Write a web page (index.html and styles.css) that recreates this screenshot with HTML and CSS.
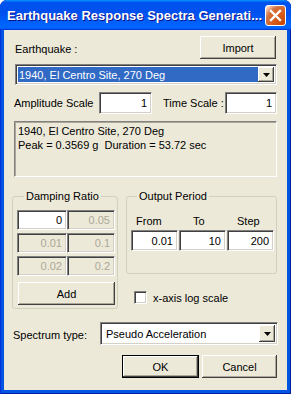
FILE: index.html
```html
<!DOCTYPE html>
<html>
<head>
<meta charset="utf-8">
<link rel="stylesheet" href="styles.css">
</head>
<body>
<div class="window">
  <div class="titlebar">
    <span class="title">Earthquake Response Spectra Generati...</span>
    <span class="close"><svg width="13" height="13" viewBox="0 0 13 13"><path d="M2 2 L11 11 M11 2 L2 11" stroke="#fff" stroke-width="2.4" stroke-linecap="square" fill="none"/></svg></span>
  </div>
  <div class="client">
    <div class="row row-eq">
      <span class="label">Earthquake :</span>
      <div class="btn btn-import">Import</div>
    </div>
    <div class="combo combo-eq">
      <div class="combo-field"><span class="sel">1940, El Centro Site, 270 Deg</span></div>
      <div class="combo-btn"><svg width="7" height="4" viewBox="0 0 7 4"><path d="M0 0 H7 L3.5 4 Z" fill="#000"/></svg></div>
    </div>
    <div class="row row-scale">
      <span class="label lbl-amp">Amplitude Scale</span>
      <div class="input in-amp">1</div>
      <span class="label lbl-time">Time Scale :</span>
      <div class="input in-time">1</div>
    </div>
    <div class="info">1940, El Centro Site, 270 Deg<br>Peak = 0.3569 g&nbsp; Duration = 53.72 sec</div>
    <div class="groups">
      <fieldset class="group damping">
        <legend>Damping Ratio</legend>
        <div class="dgrid">
          <div class="input">0</div>
          <div class="input disabled">0.05</div>
          <div class="input disabled">0.01</div>
          <div class="input disabled">0.1</div>
          <div class="input disabled">0.02</div>
          <div class="input disabled">0.2</div>
        </div>
        <div class="btn btn-add">Add</div>
      </fieldset>
      <div class="rightcol">
        <fieldset class="group output">
          <legend>Output Period</legend>
          <div class="olabels">
            <span class="ol-from">From</span>
            <span class="ol-to">To</span>
            <span class="ol-step">Step</span>
          </div>
          <div class="oinputs">
            <div class="input">0.01</div>
            <div class="input">10</div>
            <div class="input">200</div>
          </div>
        </fieldset>
        <div class="check"><span class="box"></span><span>x-axis log scale</span></div>
      </div>
    </div>
    <div class="row row-spec">
      <span class="label">Spectrum type:</span>
      <div class="combo combo-spec">
        <div class="combo-field"><span class="plain">Pseudo Acceleration</span></div>
        <div class="combo-btn"><svg width="7" height="4" viewBox="0 0 7 4"><path d="M0 0 H7 L3.5 4 Z" fill="#000"/></svg></div>
      </div>
    </div>
    <div class="row row-btns">
      <div class="btn btn-ok">OK</div>
      <div class="btn btn-cancel">Cancel</div>
    </div>
  </div>
</div>
</body>
</html>
```

FILE: styles.css
```css
html, body {
  margin: 0;
  padding: 0;
}
body {
  width: 291px;
  height: 394px;
  overflow: hidden;
  background: #fff;
  font-family: "Liberation Sans", Arial, sans-serif;
  font-size: 11px;
  color: #000;
}
.window {
  width: 291px;
  height: 394px;
  box-sizing: border-box;
  background: #0054e3;
  border-radius: 7px 7px 0 0;
  display: flex;
  flex-direction: column;
  box-shadow: inset 1px 0 #0831d9, inset -1px 0 #001ea0, inset 0 -1px #001ea0;
  overflow: hidden;
}
.titlebar {
  height: 30px;
  flex: none;
  display: flex;
  align-items: center;
  padding: 0 5px 0 7px;
  background: linear-gradient(180deg, #0997ff, #0053ee 8%, #0050ee 40%, #0066ff 88%, #0066ff 93%, #005bff 95%, #003dd7 96%, #003dd7);
  border-radius: 7px 7px 0 0;
}
.title {
  flex: 1;
  color: #fff;
  font-family: "Liberation Sans", Arial, sans-serif;
  font-weight: bold;
  font-size: 13px;
  white-space: nowrap;
  overflow: hidden;
  text-shadow: 1px 1px #0f1089;
  padding-top: 1px;
}
.close {
  width: 21px;
  height: 21px;
  box-sizing: border-box;
  border: 1px solid #fff;
  border-radius: 3px;
  background: radial-gradient(circle at 90% 90%, #cc4600 0, #dc6527 55%, #cd7546 70%, #ffccb2 90%, #fff 100%);
  display: flex;
  align-items: center;
  justify-content: center;
  margin-top: 1px;
}
.client {
  flex: 1;
  margin: 0 4px 4px 4px;
  background: #ece9d8;
  display: flex;
  flex-direction: column;
}
.row {
  display: flex;
  align-items: center;
}
.label {
  white-space: nowrap;
}
.row-eq {
  margin: 6px 11px 0 11px;
  height: 23px;
  justify-content: space-between;
}
.row-eq .label {
  padding-top: 3px;
}
.btn {
  box-sizing: border-box;
  height: 23px;
  background: #ece9d8;
  display: flex;
  align-items: center;
  justify-content: center;
  box-shadow: inset -1px -1px #404040, inset 1px 1px #ffffff, inset -2px -2px #aca899;
}
.btn-import {
  width: 76px;
}
.combo {
  box-sizing: border-box;
  display: flex;
  background: #fff;
  border-style: solid;
  border-width: 1px;
  border-color: #808080 #fff #fff #808080;
  box-shadow: inset 1px 1px #404040, inset -1px -1px #d4d0c8;
  padding: 2px;
}
.combo-eq {
  margin: 5px 10px 0 11px;
  height: 21px;
}
.combo-field {
  flex: 1;
  display: flex;
  align-items: center;
  overflow: hidden;
  white-space: nowrap;
}
.sel {
  flex: 1;
  align-self: stretch;
  display: flex;
  align-items: center;
  background: #316ac5;
  color: #fff;
  padding-left: 1px;
}
.plain {
  padding-left: 3px;
}
.combo-btn {
  width: 16px;
  flex: none;
  background: #ece9d8;
  display: flex;
  align-items: center;
  justify-content: center;
  box-shadow: inset -1px -1px #404040, inset 1px 1px #ffffff, inset -2px -2px #aca899;
}
.input {
  box-sizing: border-box;
  background: #fff;
  border-style: solid;
  border-width: 1px;
  border-color: #808080 #fff #fff #808080;
  box-shadow: inset 1px 1px #404040, inset -1px -1px #d4d0c8;
  text-align: right;
  padding-right: 4px;
  display: flex;
  align-items: center;
  justify-content: flex-end;
  white-space: nowrap;
}
.input.disabled {
  background: #ece9d8;
  color: #aca899;
}
.row-scale {
  margin: 7px 10px 0 10px;
  height: 22px;
}
.lbl-amp {
  width: 85px;
}
.in-amp {
  width: 53px;
  height: 22px;
}
.lbl-time {
  margin-left: 11px;
  width: 62px;
}
.in-time {
  width: 52px;
  height: 22px;
}
.info {
  margin: 7px 10px 0 10px;
  height: 56px;
  box-sizing: border-box;
  border-style: solid;
  border-width: 1px;
  border-color: #808080 #fff #fff #808080;
  box-shadow: inset 1px 1px #aca899;
  padding: 2px 0 0 3px;
  line-height: 14px;
}
.groups {
  display: flex;
  margin: 12px 10px 0 8px;
  gap: 8px;
  align-items: flex-start;
}
.group {
  margin: 0;
  border: 1px solid #d0d0bf;
  border-radius: 3px;
  min-width: 0;
}
.group legend {
  padding: 0 2px;
  line-height: 14px;
}
.damping {
  width: 106px;
  box-sizing: border-box;
  padding: 7px 2px 3px 4px;
}
.damping legend {
  margin-left: 7px;
}
.dgrid {
  display: grid;
  grid-template-columns: 50px 48px;
  grid-auto-rows: 20px;
  row-gap: 3px;
}
.btn-add {
  margin-top: 6px;
  width: 97px;
  margin-left: 1px;
}
.rightcol {
  width: 151px;
  display: flex;
  flex-direction: column;
}
.output {
  box-sizing: border-box;
  height: 85px;
  padding: 11px 3px 0 4px;
}
.output legend {
  margin-left: 6px;
}
.olabels {
  display: flex;
  height: 14px;
  line-height: 14px;
}
.olabels span {
  display: block;
}
.ol-from {
  width: 48px;
  padding-left: 5px;
  box-sizing: border-box;
}
.ol-to {
  width: 48px;
  padding-left: 14px;
  box-sizing: border-box;
}
.ol-step {
  padding-left: 10px;
}
.oinputs {
  display: grid;
  grid-template-columns: 47px 47px 47px;
  column-gap: 1px;
  margin-top: 2px;
}
.oinputs .input {
  height: 21px;
}
.check {
  display: flex;
  align-items: center;
  margin: 17px 0 0 8px;
  gap: 6px;
}
.box {
  width: 13px;
  height: 13px;
  box-sizing: border-box;
  background: #fff;
  border-style: solid;
  border-width: 1px;
  border-color: #808080 #fff #fff #808080;
  box-shadow: inset 1px 1px #404040, inset -1px -1px #d4d0c8;
}
.row-spec {
  margin: 13px 9px 0 9px;
  height: 23px;
}
.row-spec .label {
  width: 87px;
  padding-top: 2px;
}
.combo-spec {
  flex: 1;
  height: 23px;
}
.row-btns {
  margin: 10px 10px 0 0;
  justify-content: flex-end;
  gap: 3px;
}
.btn-ok {
  width: 77px;
  border: 1px solid #000;
}
.btn-cancel {
  width: 75px;
}
```
